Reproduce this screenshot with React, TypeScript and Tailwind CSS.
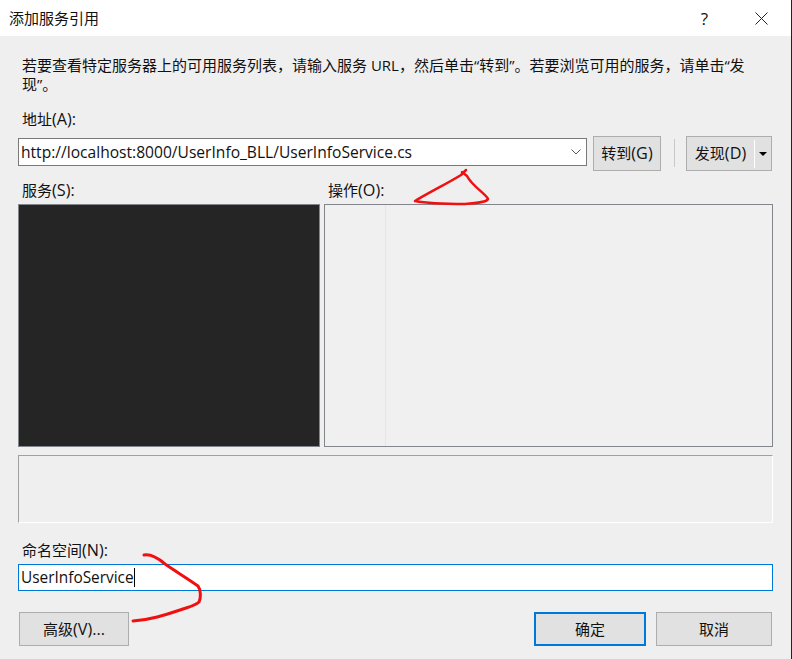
import type { ReactNode } from "react";

function Btn({ children, className }: { children: ReactNode; className: string }) {
  return (
    <div className={`flex items-center justify-center bg-[#e1e1e1] text-[15px] text-[#111] ${className}`}>
      {children}
    </div>
  );
}

function L({ children }: { children: ReactNode }) {
  return <span className="text-[16.2px]">{children}</span>;
}

export default function App() {
  return (
    <div className="relative flex h-[659px] w-[792px] flex-col overflow-hidden border-r border-[#222] bg-[#efefef] text-[15px] leading-[19px] text-[#111] [font-family:'Open_Sans','Noto_Sans_CJK_SC',sans-serif]">
      <div className="flex h-9 items-center justify-between bg-white pl-[9px] pr-[23px]">
        <span className="text-[15px]">添加服务引用</span>
        <div className="flex items-center gap-[47px]">
          <span className="text-[17px]">?</span>
          <svg width="13" height="13" viewBox="0 0 13 13" fill="none" stroke="#222" strokeWidth="1">
            <path d="M.5.5l12 12M12.5.5l-12 12" />
          </svg>
        </div>
      </div>

      <p className="mt-[20px] w-[755px] pl-[22px] text-[15px] leading-[19px]">
        若要查看特定服务器上的可用服务列表，请输入服务 URL，然后单击“转到”。若要浏览可用的服务，请单击“发现”。
      </p>

      <div className="mt-[16px] pl-[22px]">地址<L>(A):</L></div>

      <div className="mt-[7px] flex items-start pl-[18px]">
        <div className="mt-[2px] flex h-[28px] w-[569px] items-center justify-between border border-[#7a7a7a] bg-white pl-[2px] pr-[5px]">
          <span className="text-[15.6px]">http://localhost:8000/UserInfo_BLL/UserInfoService.cs</span>
          <svg width="10" height="6" viewBox="0 0 10 6" fill="none" stroke="#555" strokeWidth="1">
            <path d="M.5.5l4.5 4.5 4.5-4.5" />
          </svg>
        </div>
        <Btn className="ml-[6px] h-[35px] w-[68px] border border-[#adadad]">转到<L>(G)</L></Btn>
        <div className="ml-[13px] mt-[3px] h-[28px] w-px bg-[#c8c8c8]" />
        <div className="ml-[11px] flex h-[35px] w-[86px] items-center border border-[#adadad] bg-[#e1e1e1]">
          <span className="flex-1 text-center text-[15px]">发现<L>(D)</L></span>
          <div className="flex h-[28px] w-[17px] items-center justify-center border-l border-white">
            <div className="h-0 w-0 border-x-[4px] border-t-[4px] border-x-transparent border-t-black" />
          </div>
        </div>
      </div>

      <div className="mt-[10px] flex pl-[22px]">
        <span className="w-[306px]">服务<L>(S):</L></span>
        <span>操作<L>(O):</L></span>
      </div>

      <div className="mt-[4px] flex gap-[4px] pl-[18px]">
        <div className="h-[243px] w-[302px] border border-[#82868c] bg-[#252525]" />
        <div className="flex h-[243px] w-[449px] border border-[#82868c] bg-[#f0f0f0]">
          <div className="w-[61px] border-r border-[#e2e6ea]" />
        </div>
      </div>

      <div className="ml-[18px] mt-[8px] h-[68px] w-[755px] border border-b-white border-l-[#a0a0a0] border-r-white border-t-[#a0a0a0]" />

      <div className="mt-[18px] pl-[22px]">命名空间<L>(N):</L></div>

      <div className="ml-[18px] mt-[4px] flex h-[27px] w-[755px] items-center border border-[#0078d7] bg-white pl-[2px]">
        <span className="text-[15.4px]">UserInfoService</span>
        <div className="h-[19px] w-px bg-black" />
      </div>

      <div className="mt-[21px] flex pl-[19px]">
        <Btn className="h-[34px] w-[110px] border border-[#adadad]">高级<L>(V)...</L></Btn>
        <Btn className="ml-[405px] h-[34px] w-[112px] border-2 border-[#0078d7]">确定</Btn>
        <Btn className="ml-[10px] h-[34px] w-[116px] border border-[#adadad]">取消</Btn>
      </div>

      <svg className="pointer-events-none absolute left-0 top-0" width="792" height="659" fill="none" stroke="#f01010" strokeWidth="2.5" strokeLinecap="round" strokeLinejoin="round">
        <path d="M466 170L461 175C450 182 428 193 415 201C425 203 450 204 465 204C478 203 487 202 488 199C486 194 472 186 467 176L462 172" />
        <path d="M144 555C150 554 158 558 165 564C175 571 190 580 198 586C201 590 201 598 199 602C195 606 188 607 180 610C165 615 150 620 133 621" strokeWidth="3" />
      </svg>
    </div>
  );
}
